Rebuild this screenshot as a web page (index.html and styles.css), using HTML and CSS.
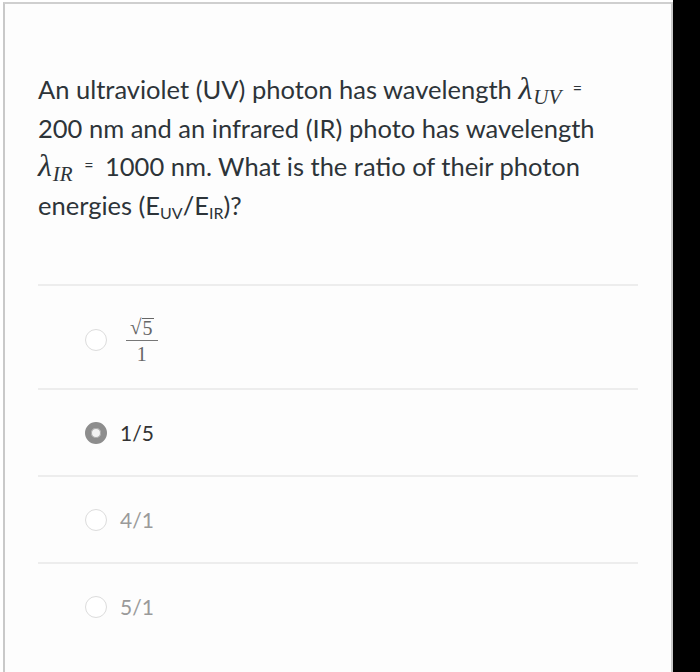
FILE: index.html
```html
<!DOCTYPE html>
<html>
<head>
<meta charset="utf-8">
<link rel="stylesheet" href="styles.css">
</head>
<body>
<div class="screen">
  <div class="card">
    <p class="question">An ultraviolet (UV) photon has wavelength <span class="math"><span class="lam">λ</span><sub class="msub">UV</sub></span> <span class="eq">=</span> 200 nm and an infrared (IR) photo has wavelength <span class="math"><span class="lam">λ</span><sub class="msub">IR</sub></span> <span class="eq">=</span> 1000 nm. What is the ratio of their photon energies (E<sub class="tsub">UV</sub>/E<sub class="tsub">IR</sub>)?</p>
    <div class="answers">
      <div class="answer first">
        <span class="radio"></span>
        <span class="frac"><span class="num"><span class="sqrt">√</span><span class="rad">5</span></span><span class="den">1</span></span>
      </div>
      <div class="answer selected">
        <span class="radio checked"></span>
        <span class="label">1/5</span>
      </div>
      <div class="answer">
        <span class="radio"></span>
        <span class="label">4/1</span>
      </div>
      <div class="answer last">
        <span class="radio"></span>
        <span class="label">5/1</span>
      </div>
    </div>
  </div>
  <div class="side"></div>
</div>
</body>
</html>
```
FILE: styles.css
```css
html, body {
  margin: 0;
  padding: 0;
  background: #ffffff;
}
.screen {
  display: flex;
  align-items: flex-start;
  width: 700px;
  height: 672px;
  box-sizing: border-box;
  padding: 2px 0 0 3px;
  overflow: hidden;
  background: #ffffff;
}
.side {
  flex: 0 0 27px;
  align-self: stretch;
  margin-top: -2px;
  height: 672px;
  background: #000000;
}
.card {
  flex: 0 0 670px;
  border-left: 2px solid #c9c9c9;
  border-right: 2px solid #c9c9c9;
  border-top: 2px solid #cfcfcf;
  background: #fdfdfd;
  padding: 0 32px 0 33px;
  box-sizing: border-box;
  height: 700px;
}
.question {
  margin: 66px 0 0 0;
  font-family: Lato, "Liberation Sans", sans-serif;
  font-size: 25.5px;
  line-height: 38.5px;
  color: #2d3439;
  width: 572px;
}
.math {
  font-family: "Liberation Serif", "DejaVu Serif", serif;
  font-style: italic;
  line-height: 0;
}
.lam {
  font-size: 32px;
  line-height: 0;
}
.msub {
  font-size: 21px;
  vertical-align: -5px;
  line-height: 0;
  margin-left: 1px;
}
.eq {
  font-size: 16px;
  vertical-align: 5px;
  line-height: 0;
  margin: 0 5px;
}
.tsub {
  font-size: 16px;
  vertical-align: -4px;
  line-height: 0;
}
.answers {
  margin-top: 60px;
  width: 600px;
  border-top: 2px solid #ededed;
}
.answer {
  display: flex;
  align-items: center;
  gap: 13px;
  padding-left: 47px;
  height: 85px;
  border-bottom: 2px solid #ededed;
  font-family: Lato, "Liberation Sans", sans-serif;
  font-size: 21px;
  color: #9a9a9a;
}
.answer.first {
  height: 104px;
  padding-top: 6px;
  box-sizing: border-box;
}
.answer.last {
  border-bottom: none;
}
.answer.selected {
  color: #333;
}
.radio {
  width: 22px;
  height: 22px;
  border-radius: 50%;
  border: 1.5px solid #dcdcdc;
  box-sizing: border-box;
  background: #fff;
  flex-shrink: 0;
}
.radio.checked {
  border: 6px solid #8d8d8d;
  background: #f2f2f2;
  box-shadow: inset 0 0 0 1px #aaa;
}
.frac {
  display: inline-flex;
  flex-direction: column;
  align-items: center;
  font-family: "Liberation Serif", "DejaVu Serif", serif;
  color: #666;
  font-size: 20px;
  margin-left: 6px;
}
.num {
  display: flex;
  align-items: flex-end;
  padding: 0 4px 3px 4px;
  border-bottom: 1.5px solid #777;
  line-height: 20px;
}
.sqrt {
  font-size: 21px;
}
.rad {
  border-top: 1px solid #666;
  line-height: 18px;
  padding: 0 1px;
}
.den {
  line-height: 20px;
  padding-top: 3px;
}
```
